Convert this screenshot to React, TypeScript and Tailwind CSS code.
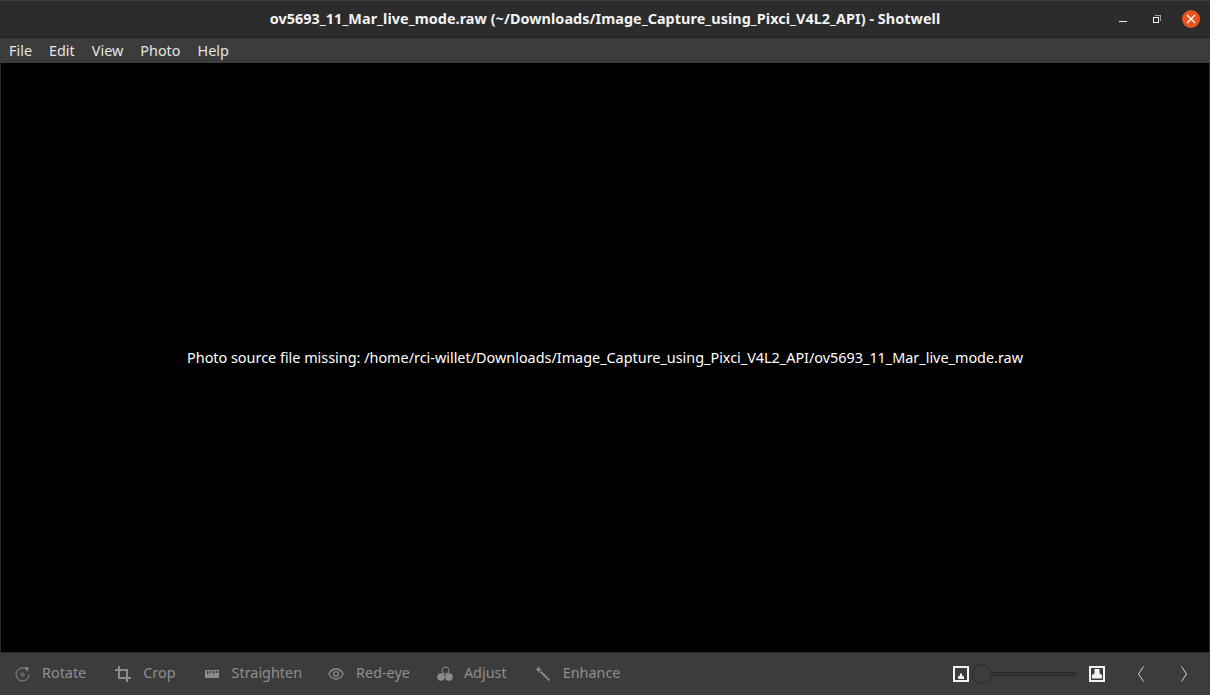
import type { ReactNode } from "react";

const menus = ["File", "Edit", "View", "Photo", "Help"];

const RotateIcon = () => (
  <svg width="15" height="16" viewBox="0 0 15 16" fill="none" stroke="#8c8c8c" strokeWidth="1">
    <path d="M11 3A6.500 6.500 0 1 0 14 8.500" />
    <path d="M9.500 1 13.800 1.500 12.500 5.800z" fill="#8c8c8c" stroke="none" />
    <circle cx="7.500" cy="8.500" r="1.500" />
  </svg>
);

const CropIcon = () => (
  <svg width="16" height="16" viewBox="0 0 16 16" fill="none" stroke="#8c8c8c" strokeWidth="2">
    <path d="M4 0v12h12M0 4h12v12" />
  </svg>
);

const RulerIcon = () => (
  <svg width="14" height="8" viewBox="0 0 14 8">
    <path d="M0 0h14v8H0z" fill="#8c8c8c" />
    <path d="M2 1h1.500v3H2zM5 1h1.500v2H5zM8 1h1.500v3H8zM11 1h1.500v2H11z" fill="#3c3c3c" />
  </svg>
);

const EyeIcon = () => (
  <svg width="16" height="12" viewBox="0 0 16 12" fill="none" stroke="#8c8c8c" strokeWidth="1.300">
    <path d="M0.800 6C2.500 2.800 5 1 8 1s5.500 1.800 7.200 5C13.500 9.200 11 11 8 11S2.500 9.200 0.800 6z" />
    <circle cx="8" cy="6" r="2.400" fill="none" />
  </svg>
);

const AdjustIcon = () => (
  <svg width="16" height="16" viewBox="0 0 16 16" fill="#8c8c8c">
    <circle cx="8.500" cy="4.500" r="3.500" fill="none" stroke="#8c8c8c" strokeWidth="1" />
    <circle cx="4" cy="11" r="3.800" />
    <circle cx="12" cy="11" r="3.800" />
  </svg>
);

const WandIcon = () => (
  <svg width="15" height="15" viewBox="0 0 15 15" fill="none" stroke="#8c8c8c">
    <path d="M5.500 5.500 14.500 14.500" strokeWidth="1.800" />
    <path d="M3.500 0 4.500 2.500 7 3.500 4.500 4.500 3.500 7 2.500 4.500 0 3.500 2.500 2.500z" fill="#8c8c8c" stroke="none" />
  </svg>
);

const PersonIcon = ({ big }: { big?: boolean }) => (
  <svg width="16" height="16" viewBox="0 0 16 16">
    <path d="M0 0h16v16H0z" fill="#f2f2f2" />
    <path d="M2 2h12v12H2z" fill="#3c3c3c" />
    {big ? (
      <path d="M5.500 3h5v4.500L13 9v3.500H3V9l2.500-1.500z" fill="#f2f2f2" />
    ) : (
      <path d="M7 7.500h2v2l2 1v2.500H5v-2.500l2-1z" fill="#f2f2f2" />
    )}
  </svg>
);

const tools: { label: string; icon: ReactNode; before: string; after: string }[] = [
  { label: "Rotate", icon: <RotateIcon />, before: "ml-[14px]", after: "ml-[12px]" },
  { label: "Crop", icon: <CropIcon />, before: "ml-[29px]", after: "ml-[12px]" },
  { label: "Straighten", icon: <RulerIcon />, before: "ml-[28px]", after: "ml-[12px]" },
  { label: "Red-eye", icon: <EyeIcon />, before: "ml-[26px]", after: "ml-[12px]" },
  { label: "Adjust", icon: <AdjustIcon />, before: "ml-[27px]", after: "ml-[11px]" },
  { label: "Enhance", icon: <WandIcon />, before: "ml-[28px]", after: "ml-[12px]" },
];

export default function App() {
  return (
    <div className="flex h-[695px] w-[1210px] flex-col overflow-hidden bg-black font-['Noto_Sans','Liberation_Sans',sans-serif] text-[14.4px]">
      <header className="relative flex h-[38px] shrink-0 items-center justify-center border-t border-t-[#3d3d3d] border-b border-b-[#1f1f1f] bg-[#2c2c2c]">
        <h1 className="text-[14.4px] font-bold tracking-[0.05px] text-[#f2f2f2]">
          ov5693_11_Mar_live_mode.raw (~/Downloads/Image_Capture_using_Pixci_V4L2_API) - Shotwell
        </h1>
        <div className="absolute top-0 right-0 flex h-full items-center">
          <span className="mt-[4px] mr-[25px] h-[1px] w-[8px] border-t border-[#f2f2f2]" />
          <span className="relative mr-[22px] h-[8px] w-[8px]">
            <span className="absolute top-[0px] left-[3px] h-[6px] w-[6px] border-t border-r border-[#a0a0a0]" />
            <span className="absolute top-[2px] left-[1px] h-[6px] w-[6px] border border-[#f2f2f2]" />
          </span>
          <span className="mr-[10px] flex h-[18px] w-[18px] items-center justify-center rounded-full bg-[#e95420]">
            <svg width="10" height="10" viewBox="0 0 10 10" stroke="#fff" strokeWidth="1.400">
              <path d="M1 1l8 8M9 1l-8 8" />
            </svg>
          </span>
        </div>
      </header>

      <nav className="flex h-[25px] shrink-0 items-center gap-[17px] bg-[#3c3c3c] pl-[9px] text-[#e4e4e4]">
        {menus.map((menu) => (
          <span key={menu}>{menu}</span>
        ))}
      </nav>

      <main className="flex flex-1 items-center justify-center border-x border-[#2c2c2c] bg-black text-white">
        <p>Photo source file missing: /home/rci-willet/Downloads/Image_Capture_using_Pixci_V4L2_API/ov5693_11_Mar_live_mode.raw</p>
      </main>

      <footer className="flex h-[43px] shrink-0 items-center border-t border-[#2c2c2c] bg-[#3c3c3c] text-[#8f8f8f]">
        {tools.map((tool) => (
          <div key={tool.label} className="flex items-center">
            <span className={`flex w-[16px] items-center justify-center ${tool.before}`}>{tool.icon}</span>
            <span className={`pb-[3px] ${tool.after}`}>{tool.label}</span>
          </div>
        ))}
        <div className="ml-auto flex items-center">
          <PersonIcon />
          <div className="ml-[3px] flex items-center">
            <span className="h-[20px] w-[20px] rounded-full border border-[#2a2a2a] bg-[#3c3c3c]" />
            <span className="ml-[-1px] h-[4px] w-[86px] rounded-r-full border border-[#2a2a2a] bg-[#333333]" />
          </div>
          <span className="ml-[12px]">
            <PersonIcon big />
          </span>
          <svg className="ml-[33px]" width="6" height="16" viewBox="0 0 6 16" fill="none" stroke="#d0d0d0">
            <path d="M5.500 0.500 0.500 8l5 7.500" />
          </svg>
          <svg className="mr-[23px] ml-[37px]" width="6" height="16" viewBox="0 0 6 16" fill="none" stroke="#d0d0d0">
            <path d="M0.500 0.500 5.500 8l-5 7.500" />
          </svg>
        </div>
      </footer>
    </div>
  );
}
